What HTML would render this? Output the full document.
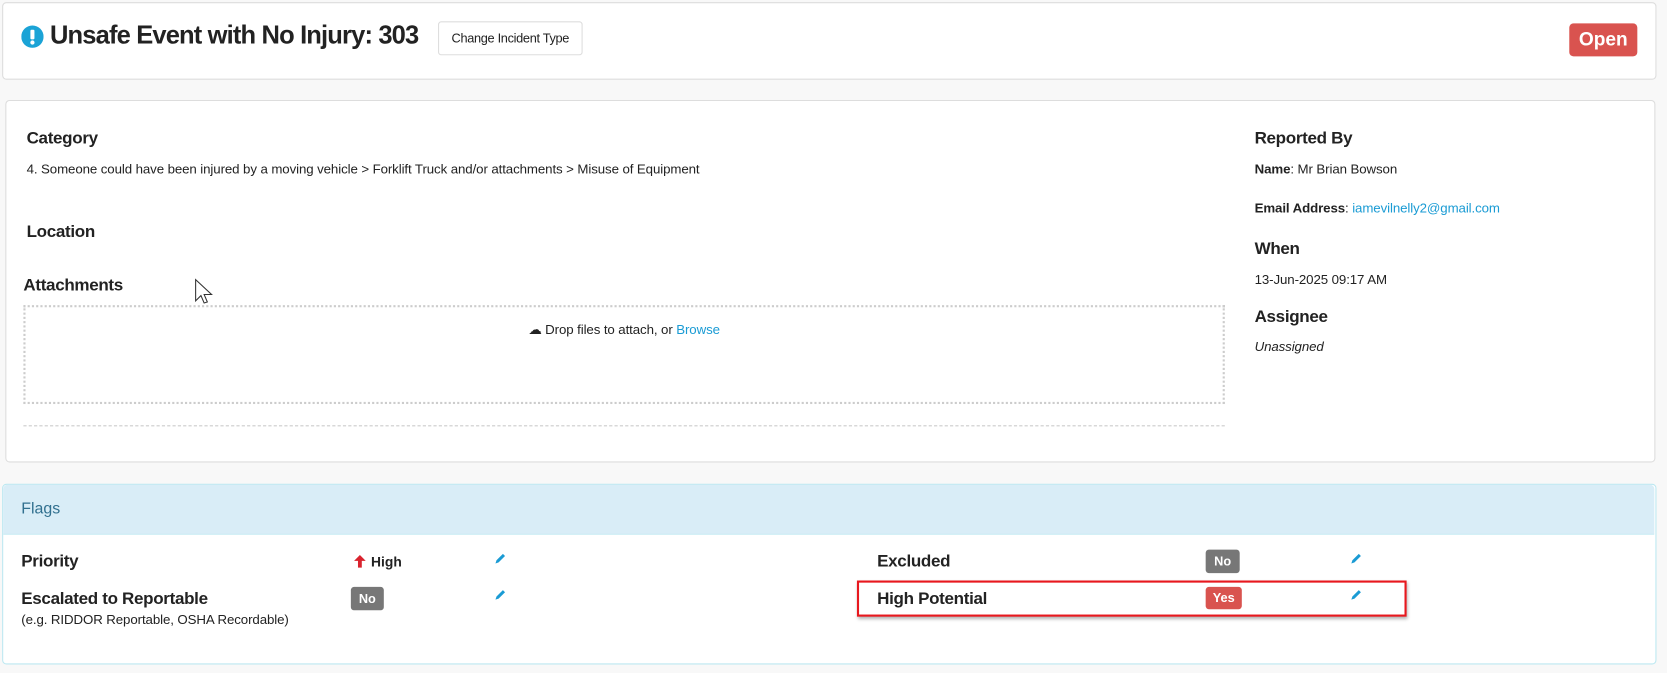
<!DOCTYPE html>
<html><head><style>
body{margin:0;background:#f8f8f8;font-family:"Liberation Sans",sans-serif;color:#222;width:1667px;height:673px;position:relative;overflow:hidden}
#w{position:absolute;left:0;top:0;width:1568px;height:633px;transform:scale(1.0632);transform-origin:0 0}
.a{position:absolute}
.card{position:absolute;background:#fff;border:1px solid #ddd;border-radius:4px}
.h{font-weight:bold;font-size:16px;letter-spacing:-0.3px}
.s{font-size:12.5px;letter-spacing:-0.1px}
.badge{position:absolute;color:#fff;font-weight:bold;font-size:12px;border-radius:3px;text-align:center}
.pen{position:absolute;width:12px;height:12px}
</style></head><body><div id="w">
<div class="card" style="left:2px;top:2px;width:1554px;height:71px"></div>
<svg class="a" style="left:20px;top:24px" width="21" height="21"><circle cx="10.5" cy="10.5" r="10.5" fill="#1ba3d6"/><rect x="8.6" y="4" width="3.8" height="9" rx="1" fill="#fff"/><circle cx="10.5" cy="16" r="2" fill="#fff"/></svg>
<div class="a" style="left:47px;top:20px;font-size:24px;font-weight:bold;letter-spacing:-0.8px;color:#222">Unsafe Event with No Injury: 303</div>
<div class="a" style="left:412px;top:20px;width:134px;height:30px;border:1px solid #ddd;border-radius:3px;font-size:12px;line-height:30px;text-align:center;letter-spacing:-0.3px">Change Incident Type</div>
<div class="a" style="left:1476px;top:22px;width:64px;height:31px;background:#d9534f;border-radius:4px;color:#fff;font-weight:bold;font-size:18px;line-height:31px;text-align:center">Open</div>

<div class="card" style="left:5px;top:94px;width:1550px;height:339px"></div>
<div class="a h" style="left:25px;top:122px">Category</div>
<div class="a s" style="left:25px;top:152px">4. Someone could have been injured by a moving vehicle &gt; Forklift Truck and/or attachments &gt; Misuse of Equipment</div>
<div class="a h" style="left:25px;top:210px">Location</div>
<div class="a h" style="left:22px;top:260px">Attachments</div>
<div class="a" style="left:22px;top:287px;width:1126px;height:89px;border:2px dotted #ccc"></div>
<div class="a s" style="left:497px;top:302px">☁ Drop files to attach, or <span style="color:#1a9bd4">Browse</span></div>
<div class="a" style="left:22px;top:400px;width:1130px;border-top:1px dashed #ccc"></div>
<div class="a h" style="left:1180px;top:122px">Reported By</div>
<div class="a s" style="left:1180px;top:152px"><b>Name</b>: Mr Brian Bowson</div>
<div class="a s" style="left:1180px;top:189px"><b>Email Address</b>: <span style="color:#1a9bd4">iamevilnelly2@gmail.com</span></div>
<div class="a h" style="left:1180px;top:226px">When</div>
<div class="a s" style="left:1180px;top:256px">13-Jun-2025 09:17 AM</div>
<div class="a h" style="left:1180px;top:290px">Assignee</div>
<div class="a s" style="left:1180px;top:319px;font-style:italic">Unassigned</div>

<div class="a" style="left:2px;top:455px;width:1554px;height:168px;background:#fff;border:1px solid #bce8f1;border-radius:4px"></div>
<div class="a" style="left:3px;top:456px;width:1553px;height:46px;background:#d9edf7;border-bottom:1px solid #bce8f1;border-radius:4px 4px 0 0"></div>
<div class="a" style="left:20px;top:470px;font-size:15px;color:#31708f">Flags</div>
<div class="a h" style="left:20px;top:520px">Priority</div>
<svg class="a" style="left:333px;top:522px" width="11" height="12" viewBox="0 0 11 12"><path d="M5.5 0L11 5.5H7.3V12H3.7V5.5H0z" fill="#d9232e"/></svg>
<div class="a" style="left:349px;top:521px;font-size:13px;font-weight:bold">High</div>
<div class="a h" style="left:20px;top:555px">Escalated to Reportable</div>
<div class="a s" style="left:20px;top:576px">(e.g. RIDDOR Reportable, OSHA Recordable)</div>
<div class="badge" style="left:330px;top:552px;width:31px;height:22px;line-height:22px;background:#777">No</div>
<div class="a h" style="left:825px;top:520px">Excluded</div>
<div class="badge" style="left:1134px;top:517px;width:32px;height:22px;line-height:22px;background:#777">No</div>
<div class="a" style="left:806px;top:546px;width:513px;height:30px;border:2px solid #e8181e;box-shadow:1px 2px 3px rgba(0,0,0,.3)"></div>
<div class="a h" style="left:825px;top:555px">High Potential</div>
<div class="badge" style="left:1134px;top:552px;width:34px;height:21px;line-height:21px;background:#d9534f">Yes</div>
<svg class="pen" style="left:465px;top:519px" viewBox="0 0 12 12"><path d="M1 11l1-3 6-6 2 2-6 6z" fill="#1a9bd4"/></svg>
<svg class="pen" style="left:465px;top:553px" viewBox="0 0 12 12"><path d="M1 11l1-3 6-6 2 2-6 6z" fill="#1a9bd4"/></svg>
<svg class="pen" style="left:1270px;top:519px" viewBox="0 0 12 12"><path d="M1 11l1-3 6-6 2 2-6 6z" fill="#1a9bd4"/></svg>
<svg class="pen" style="left:1270px;top:553px" viewBox="0 0 12 12"><path d="M1 11l1-3 6-6 2 2-6 6z" fill="#1a9bd4"/></svg>
<svg class="a" style="left:183px;top:262px" width="20" height="26"><path d="M1 1v20l5-5 3 7 3-1-3-7h7z" fill="#fff" stroke="#333"/></svg>
</div></body></html>
